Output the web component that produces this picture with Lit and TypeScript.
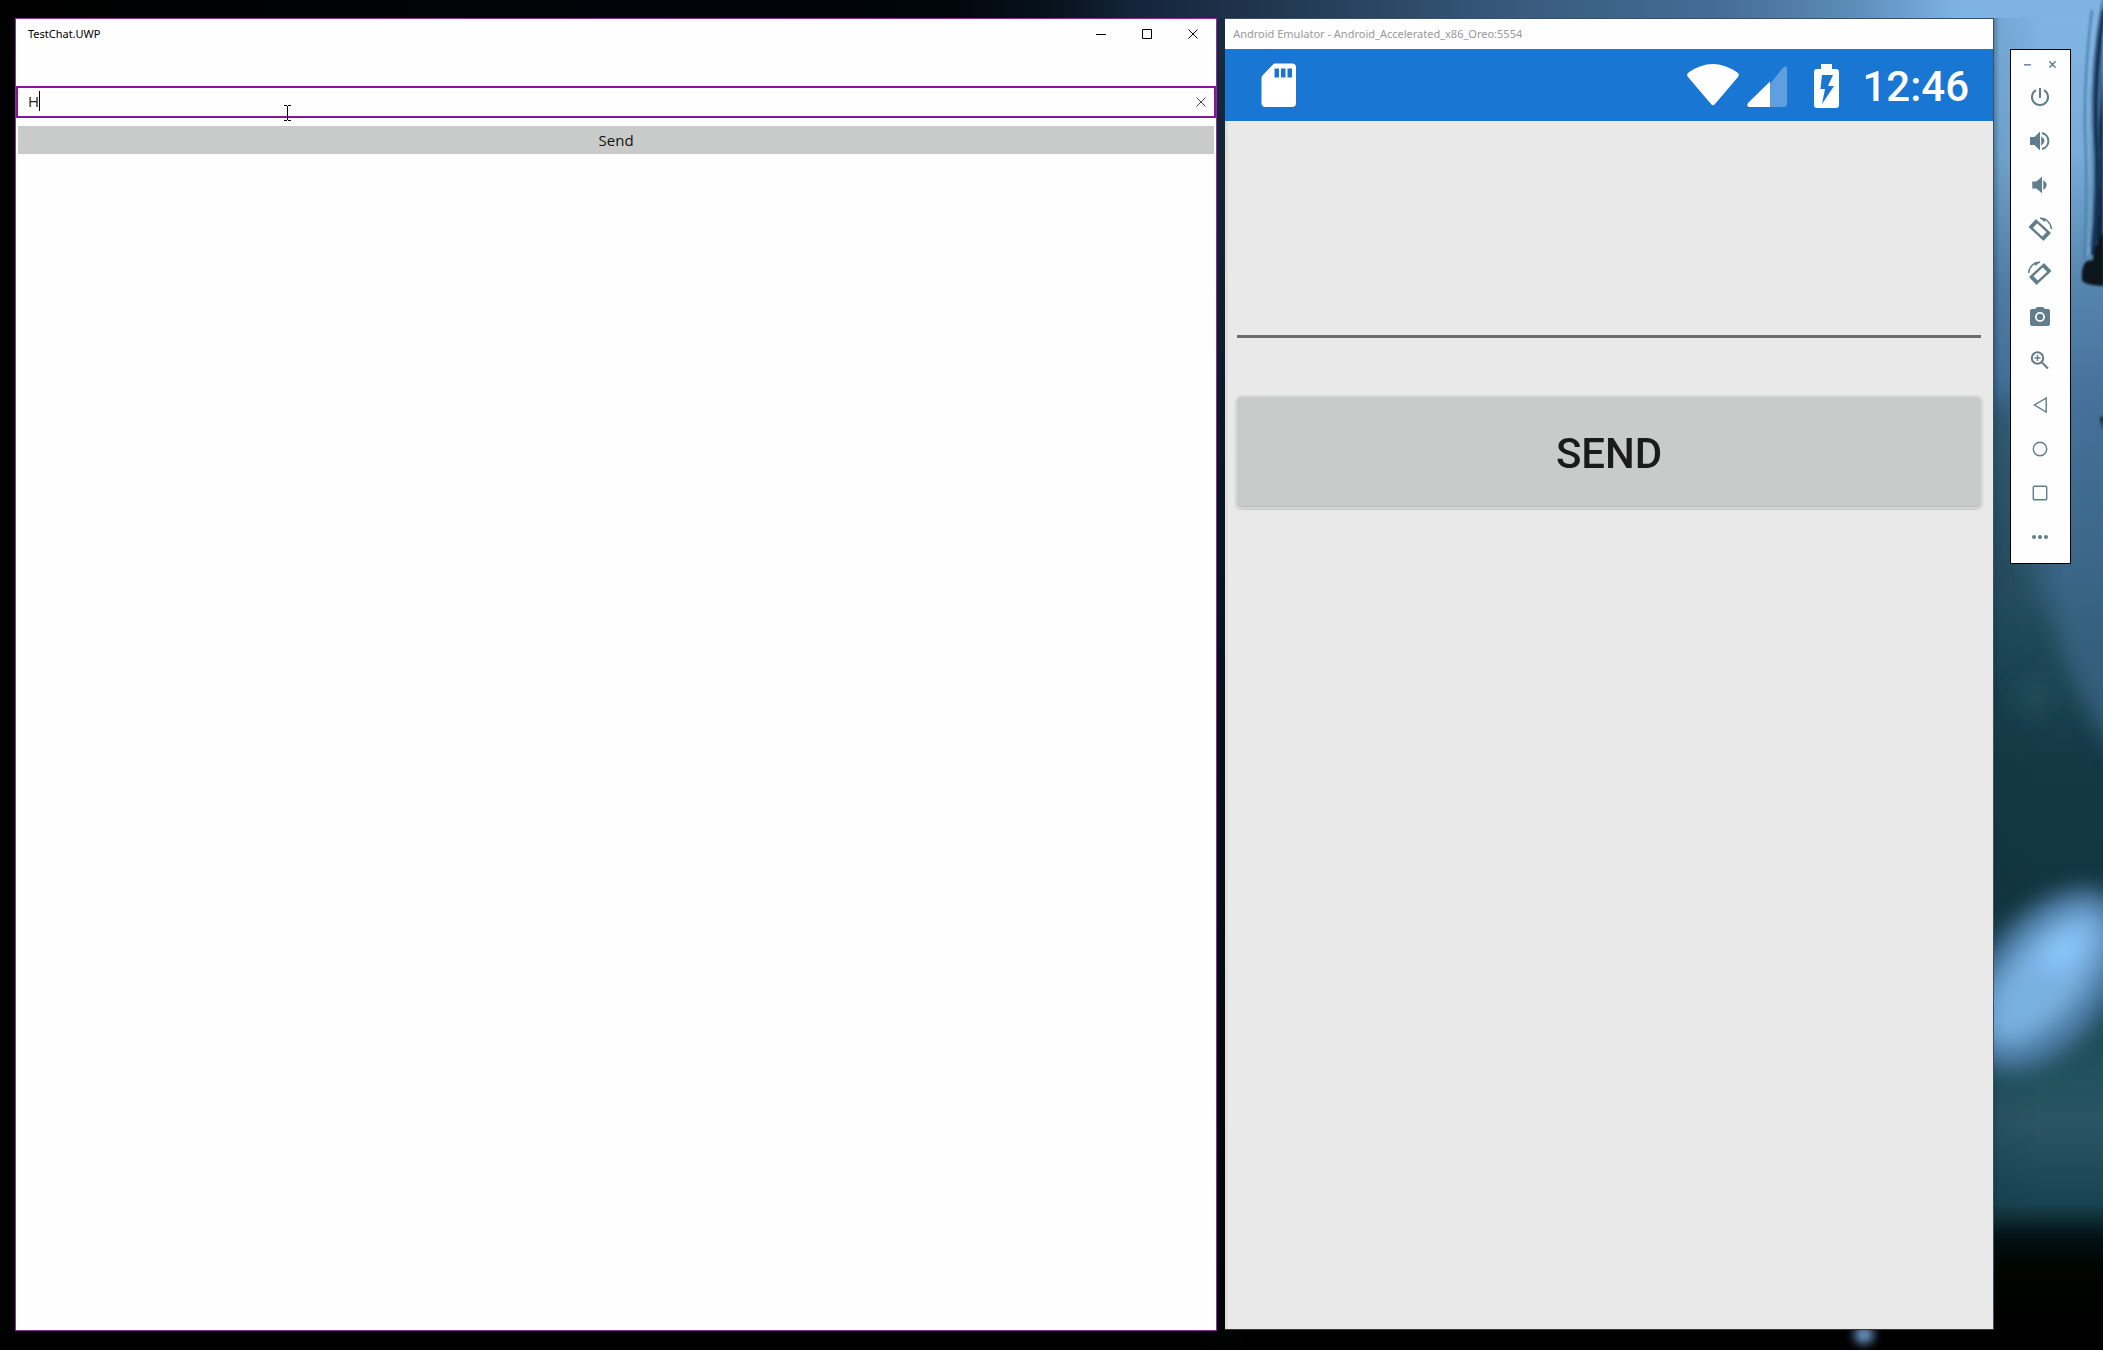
import { LitElement, html, css, svg } from "lit";
import { customElement, state } from "lit/decorators.js";

const rotateShape = svg`
  <path fill-rule="evenodd" stroke="#607d8b" stroke-width="1.2" stroke-linejoin="round" d="M1.400 10 8 2.900 22.100 16 15.500 23.100zM4.200 10.900 14.300 20.400 19.300 15.100 9.200 5.600z"/>
  <path class="line thin" d="M12 1.300c6 0 11 4.500 11.300 10.700"/>
  <path d="M11.500 .600 17.500 1.800 16.500 5z"/>`;

const tools = [
  {
    label: "Power",
    icon: svg`<path class="line" d="M12 3v10M8 5.100a8 8 0 1 0 8 0"/>`,
  },
  {
    label: "Volume up",
    icon: svg`<path d="M2 8h4.500l5.500-5.500v19L6.500 16H2z"/><path d="M13.200 7.300q6.600 4.700 0 9.400z"/><path class="line" d="M14 4a8.200 8.200 0 0 1 0 16"/>`,
  },
  {
    label: "Volume down",
    icon: svg`<path d="M4.300 8.500h4l5.700-4.700v16.400l-5.700-4.700h-4z"/><path d="M15.300 7q6.800 5 0 10z"/>`,
  },
  {
    label: "Rotate left",
    icon: rotateShape,
  },
  {
    label: "Rotate right",
    icon: svg`<g transform="matrix(-1 0 0 1 24 0)">${rotateShape}</g>`,
  },
  {
    label: "Take screenshot",
    icon: svg`<path fill-rule="evenodd" d="M9 2h6l2 2h3.500a2 2 0 0 1 1.500 2v13a2 2 0 0 1-2 2H4a2 2 0 0 1-2-2V6a2 2 0 0 1 2-2h3zM12 7a5 5 0 1 0 0 10 5 5 0 0 0 0-10z"/><circle cx="12" cy="12" r="3.200"/>`,
  },
  {
    label: "Zoom",
    icon: svg`<circle class="line" cx="9.500" cy="9" r="5.700"/><path class="line" d="m14 13.500 6 6"/><path class="line thin" d="M9.500 6v6M6.500 9h6"/>`,
  },
  {
    label: "Back",
    icon: svg`<path class="line thin" d="M18.200 5v14L6.500 12z"/>`,
  },
  {
    label: "Home",
    icon: svg`<circle class="line thin" cx="12" cy="12" r="6.700"/>`,
  },
  {
    label: "Overview",
    icon: svg`<rect class="line thin" x="5.300" y="5.300" width="13.400" height="13.400" rx="1"/>`,
  },
  {
    label: "More",
    icon: svg`<circle cx="6" cy="12" r="2"/><circle cx="12" cy="12" r="2"/><circle cx="18" cy="12" r="2"/>`,
  },
];

const minimizeIcon = svg`<path d="M0 5.500h10"/>`;
const maximizeIcon = svg`<path d="M.500 .500h9v9h-9z"/>`;
const closeIcon = svg`<path d="m.500 .500 9 9m0-9-9 9"/>`;

@customElement("desktop-wallpaper")
class DesktopWallpaper extends LitElement {
  static styles = css`
    :host {
      display: block;
    }
    .scene {
      display: block;
      width: 100%;
      height: 100%;
    }
  `;

  render() {
    return html`
      <svg class="scene" viewBox="0 0 2103 1350" preserveAspectRatio="none" aria-hidden="true">
        <defs>
          <linearGradient id="sky">
            <stop offset="0" stop-color="#000"/>
            <stop offset=".45" stop-color="#01060c"/>
            <stop offset=".5" stop-color="#07121b"/>
            <stop offset=".54" stop-color="#14253a"/>
            <stop offset=".6" stop-color="#20354f"/>
            <stop offset=".72" stop-color="#375a7c"/>
            <stop offset=".82" stop-color="#466d97"/>
            <stop offset=".88" stop-color="#5c8cb8"/>
            <stop offset=".93" stop-color="#7db2e2"/>
            <stop offset="1" stop-color="#7fb3e2"/>
          </linearGradient>
          <linearGradient id="side" x1="0" y1="0" x2="0" y2="1">
            <stop offset="0" stop-color="#80b4e4"/>
            <stop offset=".1" stop-color="#78add9"/>
            <stop offset=".2" stop-color="#5584ae"/>
            <stop offset=".3" stop-color="#446f97"/>
            <stop offset=".4" stop-color="#315b76"/>
            <stop offset=".46" stop-color="#204a58"/>
            <stop offset=".56" stop-color="#143945"/>
            <stop offset=".66" stop-color="#123540"/>
            <stop offset=".78" stop-color="#20505c"/>
            <stop offset=".83" stop-color="#2a5564"/>
            <stop offset=".89" stop-color="#194350"/>
            <stop offset=".915" stop-color="#031015"/>
            <stop offset=".94" stop-color="#010401"/>
            <stop offset="1" stop-color="#000"/>
          </linearGradient>
          <linearGradient id="gap" x1="0" y1="0" x2="0" y2="1">
            <stop offset="0" stop-color="#182b40"/>
            <stop offset=".35" stop-color="#081823"/>
            <stop offset="1" stop-color="#000302"/>
          </linearGradient>
          <linearGradient id="shade">
            <stop offset="0" stop-color="#0c2b38" stop-opacity=".45"/>
            <stop offset=".15" stop-color="#0c2b38" stop-opacity=".1"/>
            <stop offset="1" stop-color="#0c2b38" stop-opacity="0"/>
          </linearGradient>
          <filter id="soft" x="-50%" y="-50%" width="200%" height="200%">
            <feGaussianBlur stdDeviation="11"/>
          </filter>
          <filter id="faint" x="-50%" y="-50%" width="200%" height="200%">
            <feGaussianBlur stdDeviation="5"/>
          </filter>
          <filter id="edge"><feGaussianBlur stdDeviation="1"/></filter>
        </defs>
        <rect width="2103" height="1350"/>
        <rect width="2103" height="40" fill="url(#sky)"/>
        <rect x="1210" y="19" width="30" height="1331" fill="url(#gap)"/>
        <rect x="1990" y="19" width="113" height="1331" fill="url(#side)"/>
        <rect x="1992" y="18" width="50" height="1200" fill="url(#shade)"/>
        <g filter="url(#soft)">
          <path d="M1980 400h32l8 200h-40z" fill="#1c4453" opacity=".6"/>
          <path d="M2125 380V760q-60-60-80-180l15-200z" fill="#446f97" opacity=".6"/>
          <ellipse cx="2048" cy="979" rx="104" ry="62" transform="rotate(-52 2048 979)" fill="#4f7ea8"/>
          <ellipse cx="2046" cy="977" rx="80" ry="36" transform="rotate(-50 2046 977)" fill="#78b0e0"/>
          <ellipse cx="2062" cy="952" rx="26" ry="12" transform="rotate(-45 2062 952)" fill="#8ccaff"/>
          <ellipse cx="2034" cy="696" rx="18" ry="18" fill="#28535e" opacity=".6"/>
        </g>
        <ellipse cx="1864" cy="1335" rx="10" ry="9" fill="#6794c0" filter="url(#faint)"/>
        <g filter="url(#edge)" fill="none">
          <path d="M2103 0h-2q-12 60-11 125 3 55-1 120l5 10q5-12 9-20z" fill="#3f6c95"/>
          <path d="M2101 0q-12 60-10 125 4 60-3 130" stroke="#8dbfe8" stroke-width="1"/>
          <path d="M2104 10q-10 60-8 120 4 60-3 125" stroke="#132f50" stroke-width="4"/>
          <path d="M2092 10q-8 60-7 120 3 60-1 130" stroke="#4c7fa9" stroke-width="2"/>
          <path d="M2103 70v165l-7 8q6-60 3-115z" fill="#0e2740"/>
          <path d="M2104 234q-9 6-11 26l-6 1q-6 4-5 19 2 5 22 6z" fill="#07131a"/>
          <path d="M2103 416l-3 2 3 12z" fill="#0a1d29"/>
        </g>
      </svg>
    `;
  }
}

@customElement("chat-window")
class ChatWindow extends LitElement {
  static styles = css`
    :host {
      display: flex;
      flex-direction: column;
      box-sizing: border-box;
      border: 1px solid #8f2b9f;
      background: #fefefe;
      font-family: "Noto Sans", "Open Sans", sans-serif;
      color: #000;
    }
    .titlebar {
      display: flex;
      justify-content: space-between;
      height: 30px;
    }
    .title {
      margin: 0;
      padding-left: 12px;
      font-size: 11px;
      line-height: 30px;
      font-weight: 400;
    }
    .controls {
      display: flex;
    }
    .control {
      display: grid;
      place-items: center;
      width: 46px;
      padding: 0;
      border: 0;
      background: none;
    }
    .glyph {
      width: 10px;
      height: 10px;
      fill: none;
      stroke: #000;
      stroke-width: 1;
    }
    .compose {
      display: flex;
      flex-direction: column;
      gap: 8px;
      padding-top: 37px;
    }
    .field {
      display: flex;
      align-items: center;
      box-sizing: border-box;
      height: 32px;
      border: 2px solid #881798;
    }
    .message {
      flex: 1;
      min-width: 0;
      height: 20px;
      padding: 0 0 2px 10px;
      border: 0;
      outline: 0;
      background: none;
      font: 15px/20px "Open Sans", "Noto Sans", sans-serif;
      color: #222;
    }
    .clear {
      display: grid;
      place-items: center;
      width: 26px;
      height: 28px;
      padding: 0;
      border: 0;
      background: none;
    }
    .clear .glyph {
      stroke: #444;
    }
    .send {
      height: 28px;
      margin: 0 2px;
      padding: 0;
      border: 0;
      background: #c9cbca;
      font: 15px/28px "Open Sans", "Noto Sans", sans-serif;
      color: #111;
    }
    .caret {
      position: absolute;
      left: 23px;
      top: 72px;
      width: 1px;
      height: 20px;
      background: #000;
    }
    .pointer {
      position: absolute;
      left: 268px;
      top: 86px;
      width: 7px;
      height: 16px;
      fill: none;
      stroke: #000;
    }
  `;

  @state() private message = "H";

  render() {
    return html`
      <header class="titlebar">
        <h1 class="title">TestChat.UWP</h1>
        <div class="controls">
          <button class="control" aria-label="Minimize"><svg class="glyph" viewBox="0 0 10 10">${minimizeIcon}</svg></button>
          <button class="control" aria-label="Maximize"><svg class="glyph" viewBox="0 0 10 10">${maximizeIcon}</svg></button>
          <button class="control" aria-label="Close"><svg class="glyph" viewBox="0 0 10 10">${closeIcon}</svg></button>
        </div>
      </header>
      <main class="compose">
        <div class="field">
          <input
            class="message"
            aria-label="Message"
            .value=${this.message}
            @input=${(e: Event) => (this.message = (e.target as HTMLInputElement).value)}
          />
          <button class="clear" aria-label="Clear" @click=${() => (this.message = "")}>
            <svg class="glyph" viewBox="0 0 10 10">${closeIcon}</svg>
          </button>
        </div>
        <button class="send">Send</button>
      </main>
      ${this.message === "H" ? html`<span class="caret"></span>` : ""}
      <svg class="pointer" viewBox="0 0 7 16" aria-hidden="true"><path d="M0 .500h3m1 0h3M3.500 1v14M0 15.500h3m1 0h3"/></svg>
    `;
  }
}

@customElement("emulator-window")
class EmulatorWindow extends LitElement {
  static styles = css`
    :host {
      display: flex;
      flex-direction: column;
      box-sizing: border-box;
      border-top: 1px solid #3b5262;
      border-right: 1px solid #3b5262;
      border-bottom: 1px solid #333;
      background: #e9e9e9;
      font-family: Roboto, sans-serif;
    }
    .titlebar {
      height: 30px;
      background: #fefefe;
    }
    .title {
      margin: 0;
      padding-left: 8px;
      font: 400 11px/30px "Noto Sans", "Open Sans", sans-serif;
      color: #999;
    }
    .status {
      display: flex;
      align-items: center;
      justify-content: space-between;
      height: 72px;
      padding: 0 24px 0 36px;
      background: #1976d2;
      color: #fff;
    }
    .indicators {
      display: flex;
      align-items: center;
      gap: 21px;
      padding-top: 3px;
    }
    .card {
      width: 36px;
      height: 44px;
    }
    .tray {
      width: 154px;
      height: 48px;
    }
    .icon {
      fill: #fff;
    }
    .dim {
      fill: #5f9fe0;
    }
    .cut {
      fill: #1976d2;
    }
    .clock {
      font-size: 42px;
      line-height: 69px;
      font-weight: 500;
    }
    .screen {
      display: flex;
      flex: 1;
      flex-direction: column;
      gap: 59px;
      padding: 120px 12px 0 9px;
      border-left: 3px solid #dedede;
    }
    .entry {
      height: 97px;
      box-sizing: border-box;
      padding: 0;
      border: 0;
      border-bottom: 3px solid #6c6c6c;
      outline: 0;
      background: none;
      font: 43px/60px Roboto, sans-serif;
    }
    .send {
      box-sizing: border-box;
      height: 109px;
      padding: 4px 0 0;
      border: 0;
      border-radius: 5px;
      background: #c9cbca;
      box-shadow: 0 1px 0 #b8baba, 0 0 0 2px #dadada, 0 2px 2px 2px #ccc;
      font: 500 42px/105px Roboto, sans-serif;
      color: #1b1b1b;
    }
  `;

  render() {
    return html`
      <header class="titlebar">
        <h1 class="title">Android Emulator - Android_Accelerated_x86_Oreo:5554</h1>
      </header>
      <div class="status">
        <svg class="icon card" viewBox="0 0 36 44" role="img" aria-label="SD card">
          <path d="M13.500 .500H31a4 4 0 0 1 4 4V40a4 4 0 0 1-4 4H4.500a4 4 0 0 1-4-4V14.500q0-1 1-2L12 1.500q.7-1 1.500-1z"/>
          <path class="cut" d="M13.500 5.500h4.500v9h-4.500zM20 5.500h4.500v9H20zM26.500 5.500H31v9h-4.500z"/>
        </svg>
        <div class="indicators">
          <svg class="icon tray" viewBox="0 0 154 48" role="img" aria-label="Wi-Fi, mobile signal, battery charging">
            <path d="M1.500 9.500q24-17 49 0 2.500 2 .5 4.500L28 41q-2 2.500-4 0L1 14q-2-2.500.5-4.500z"/>
            <path class="dim" d="m83 21 12.500-15.500q4-4.500 4.500 0V41q0 3-3 3H83z"/>
            <path d="M83 18.500V44H62q-3-1-1-4z"/>
            <path d="M134 1h11v5h4q3 0 3 3v33q0 3-3 3h-19q-3 0-3-3V9q0-3 3-3h4z"/>
            <path class="cut" d="M135 12h11l-5 11h6l-12 18 3-15h-4.500z"/>
          </svg>
          <time class="clock">12:46</time>
        </div>
      </div>
      <main class="screen">
        <input class="entry" aria-label="Message" />
        <button class="send">SEND</button>
      </main>
    `;
  }
}

@customElement("emulator-tools")
class EmulatorTools extends LitElement {
  static styles = css`
    :host {
      display: flex;
      flex-direction: column;
      box-sizing: border-box;
      width: 61px;
      padding-bottom: 4px;
      border: 1px solid #000;
      background: #fefefe;
    }
    .controls {
      display: flex;
      box-sizing: border-box;
      justify-content: center;
      gap: 9px;
      height: 25px;
      padding: 3px 1px 0 0;
    }
    .control {
      display: grid;
      place-items: center;
      width: 16px;
      padding: 0;
      border: 0;
      background: none;
    }
    .glyph {
      width: 7px;
      height: 7px;
      fill: none;
      stroke: #607d8b;
      stroke-width: 2;
    }
    .tool {
      display: grid;
      place-items: center;
      height: 44px;
      padding: 0 1px 0 0;
      border: 0;
      background: none;
    }
    .icon {
      width: 24px;
      height: 24px;
      fill: #607d8b;
    }
    .line {
      fill: none;
      stroke: #607d8b;
      stroke-width: 2;
    }
    .thin {
      stroke-width: 1.4;
    }
  `;

  render() {
    return html`
      <div class="controls">
        <button class="control" aria-label="Minimize"><svg class="glyph" viewBox="0 0 10 10">${minimizeIcon}</svg></button>
        <button class="control" aria-label="Close"><svg class="glyph" viewBox="0 0 10 10">${closeIcon}</svg></button>
      </div>
      ${tools.map(
        (tool) => html`<button class="tool" aria-label=${tool.label}>
          <svg class="icon" viewBox="0 0 24 24">${tool.icon}</svg>
        </button>`
      )}
    `;
  }
}

@customElement("app-root")
class AppRoot extends LitElement {
  static styles = css`
    :host {
      display: block;
      position: relative;
      background: #000;
    }
    .wallpaper {
      position: absolute;
      inset: 0;
    }
    .desktop {
      position: relative;
      display: flex;
      box-sizing: border-box;
      min-height: 100vh;
      padding: 18px 32px 19px 15px;
    }
    .chat {
      position: relative;
      flex: 1202 1 0;
      margin-right: 8px;
    }
    .emulator {
      flex: 769 1 0;
      margin-right: 16px;
      margin-bottom: 1px;
    }
    .tools {
      align-self: flex-start;
      margin-top: 31px;
    }
  `;

  render() {
    return html`
      <desktop-wallpaper class="wallpaper"></desktop-wallpaper>
      <div class="desktop">
        <chat-window class="chat"></chat-window>
        <emulator-window class="emulator"></emulator-window>
        <emulator-tools class="tools"></emulator-tools>
      </div>
    `;
  }
}
